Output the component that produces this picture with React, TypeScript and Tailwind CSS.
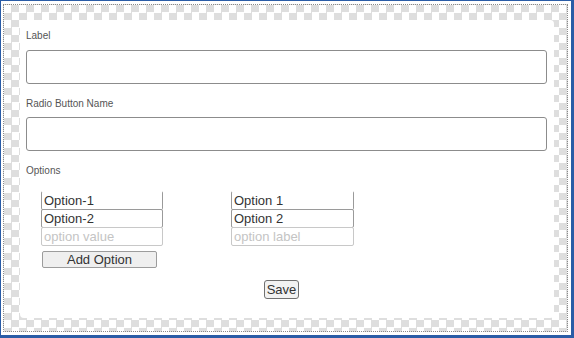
import React from 'react';

const font = { fontFamily: '"Liberation Sans", Arial, sans-serif' };

const OptionBox: React.FC<{ value?: string; placeholder: string; first?: boolean }> = ({ value, placeholder, first }) => (
  <div
    className={`h-[19px] w-full border border-[#9a9a9a] rounded-[2px] bg-white flex items-center px-[2px] text-[13px] leading-none ${
      first ? 'border-t-transparent' : '-mt-px'
    } ${value ? 'text-[#333]' : 'text-[#c4c4c4] border-[#c8c8c8]'}`}
  >
    {value ?? placeholder}
  </div>
);

export default function App() {
  return (
    <div
      style={font}
      className="w-[574px] h-[338px] bg-white border-l border-t border-r-[3px] border-b-[3px] border-[#2a5ca6] pl-[2px] pt-[3px] pr-[3px] pb-[3px]"
    >
      <div className="h-full border border-dotted border-[#8a8a8a] bg-[conic-gradient(#dedede_25%,#ffffff_0_50%,#dedede_0_75%,#ffffff_0)] bg-[length:15px_15px] pl-[16px] pt-[15px] pr-[13px] pb-[13px]">
        <div className="h-full bg-white rounded-[4px] pl-[6px] pr-[7px] pt-[10px]">
          <div className="text-[10px] leading-[12px] text-[#555]">Label</div>
          <div className="mt-[8px] h-[34px] border-[1.5px] border-[#8c8c8c] rounded-[3px]" />

          <div className="mt-[14px] text-[10px] leading-[12px] text-[#555]">Radio Button Name</div>
          <div className="mt-[7px] h-[34px] border-[1.5px] border-[#8c8c8c] rounded-[3px]" />

          <div className="mt-[14px] text-[10px] leading-[12px] text-[#555]">Options</div>

          <div className="mt-[14px] pl-[15px] flex gap-[68px]">
            <div className="w-[122px] flex flex-col">
              <OptionBox first value="Option-1" placeholder="option value" />
              <OptionBox value="Option-2" placeholder="option value" />
              <OptionBox placeholder="option value" />
              <button className="mt-[5px] ml-px w-[115px] h-[17px] bg-[#efefef] border border-[#9c9c9c] rounded-[2px] text-[13px] leading-none text-[#333]">
                Add Option
              </button>
            </div>
            <div className="w-[123px] flex flex-col">
              <OptionBox first value="Option 1" placeholder="option label" />
              <OptionBox value="Option 2" placeholder="option label" />
              <OptionBox placeholder="option label" />
            </div>
          </div>

          <button className="mt-[12px] ml-[238px] w-[35px] h-[19px] bg-[#f2f2f2] border border-[#707070] rounded-[3px] text-[13px] leading-none text-[#333]">
            Save
          </button>
        </div>
      </div>
    </div>
  );
}
